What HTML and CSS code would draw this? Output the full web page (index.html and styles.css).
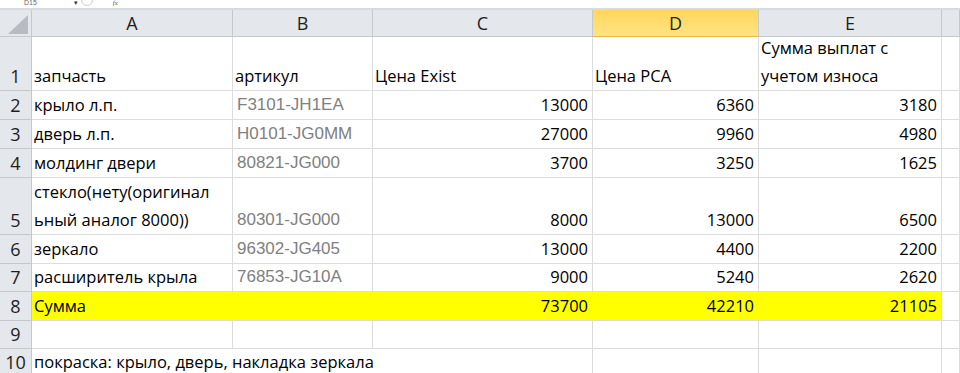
FILE: index.html
```html
<!DOCTYPE html>
<html lang="ru">
<head>
<meta charset="utf-8">
<title>Лист</title>
<link rel="stylesheet" href="styles.css">
</head>
<body>
<div class="fbar">
  <span class="namebox">D15</span>
  <span class="drop">▾</span>
  <span class="fcircle"></span>
  <span class="fx">fx</span>
</div>
<div class="sheet">
  <div class="hd corner"><svg width="31" height="26" viewBox="0 0 31 26"><polygon points="8,24 28,24 28,5" fill="#b7bcc3"/></svg></div>
  <div class="hd col">A</div>
  <div class="hd col">B</div>
  <div class="hd col">C</div>
  <div class="hd col sel">D</div>
  <div class="hd col">E</div>
  <div class="hd col"></div>

  <div class="hd rn">1</div>
  <div class="c">запчасть</div>
  <div class="c">артикул</div>
  <div class="c">Цена Exist</div>
  <div class="c">Цена РСА</div>
  <div class="c">Сумма выплат с<br>учетом износа</div>
  <div class="c"></div>

  <div class="hd rn">2</div>
  <div class="c">крыло л.п.</div>
  <div class="c art">F3101-JH1EA</div>
  <div class="c num">13000</div>
  <div class="c num">6360</div>
  <div class="c num">3180</div>
  <div class="c"></div>

  <div class="hd rn">3</div>
  <div class="c">дверь л.п.</div>
  <div class="c art">H0101-JG0MM</div>
  <div class="c num">27000</div>
  <div class="c num">9960</div>
  <div class="c num">4980</div>
  <div class="c"></div>

  <div class="hd rn">4</div>
  <div class="c">молдинг двери</div>
  <div class="c art">80821-JG000</div>
  <div class="c num">3700</div>
  <div class="c num">3250</div>
  <div class="c num">1625</div>
  <div class="c"></div>

  <div class="hd rn">5</div>
  <div class="c">стекло(нету(оригинал<br>ьный аналог 8000))</div>
  <div class="c art">80301-JG000</div>
  <div class="c num">8000</div>
  <div class="c num">13000</div>
  <div class="c num">6500</div>
  <div class="c"></div>

  <div class="hd rn">6</div>
  <div class="c">зеркало</div>
  <div class="c art">96302-JG405</div>
  <div class="c num">13000</div>
  <div class="c num">4400</div>
  <div class="c num">2200</div>
  <div class="c"></div>

  <div class="hd rn">7</div>
  <div class="c">расширитель крыла</div>
  <div class="c art">76853-JG10A</div>
  <div class="c num">9000</div>
  <div class="c num">5240</div>
  <div class="c num">2620</div>
  <div class="c"></div>

  <div class="hd rn">8</div>
  <div class="c hl">Сумма</div>
  <div class="c hl"></div>
  <div class="c hl num">73700</div>
  <div class="c hl num">42210</div>
  <div class="c hl num hl-end">21105</div>
  <div class="c"></div>

  <div class="hd rn">9</div>
  <div class="c"></div>
  <div class="c"></div>
  <div class="c"></div>
  <div class="c"></div>
  <div class="c"></div>
  <div class="c"></div>

  <div class="hd rn">10</div>
  <div class="c span3">покраска: крыло, дверь, накладка зеркала</div>
  <div class="c"></div>
  <div class="c"></div>
  <div class="c"></div>
</div>
</body>
</html>
```

FILE: styles.css
```css
* { box-sizing: border-box; }
html, body {
  margin: 0;
  padding: 0;
  background: #ffffff;
  overflow: hidden;
}
body {
  width: 960px;
  height: 373px;
  font-family: "Open Sans", "Noto Sans", sans-serif;
  color: #000;
}
.fbar {
  height: 10px;
  border-bottom: 2px solid #d7dbe0;
  display: flex;
  align-items: flex-start;
  overflow: hidden;
  font-family: "Liberation Sans", sans-serif;
  color: #6b6b6b;
}
.namebox {
  margin-left: 24px;
  margin-top: -1px;
  font-size: 7px;
  line-height: 8px;
}
.drop {
  margin-left: 37px;
  margin-top: -1px;
  font-size: 7px;
  line-height: 8px;
  color: #333;
}
.fcircle {
  margin-left: 3px;
  margin-top: -6px;
  width: 12px;
  height: 12px;
  border-radius: 50%;
  border: 1px solid #c8ccd1;
}
.fx {
  margin-left: 20px;
  margin-top: -1px;
  font-size: 7px;
  line-height: 8px;
  font-style: italic;
  font-family: "Liberation Serif", serif;
  color: #555;
}
.sheet {
  display: grid;
  grid-template-columns: 32px 201px 140px 220px 166px 183px 1fr;
  grid-template-rows: 27px 54px 29px 29px 29px 57px 29px 28px 29px 28px 28px;
}
.hd {
  background: #e4e7ec;
  border-right: 1px solid #c5c9cf;
  border-bottom: 1px solid #c5c9cf;
  display: flex;
  align-items: center;
  justify-content: center;
  font-size: 18px;
  color: #1e1e1e;
}
.corner {
  align-items: flex-end;
  justify-content: flex-start;
}
.corner svg { display: block; }
.col { line-height: 26px; }
.sel {
  background: linear-gradient(#ffd65a, #ffe384);
  border-bottom-color: #e3b94a;
}
.rn {
  align-items: flex-end;
  line-height: 28px;
}
.c {
  border-right: 1px solid #dadcdd;
  border-bottom: 1px solid #dadcdd;
  display: flex;
  align-items: flex-end;
  padding: 0 4px 0 2px;
  font-size: 16.5px;
  line-height: 28px;
  white-space: nowrap;
}
.art {
  font-family: "Liberation Sans", Arial, sans-serif;
  font-size: 17px;
  color: #808080;
  padding-left: 4px;
}
.num { justify-content: flex-end; }
.hl {
  background: #ffff00;
  border-right-color: #ffff00;
}
.hl-end { border-right-color: #dadcdd; }
.span3 { grid-column: span 3; }
```
